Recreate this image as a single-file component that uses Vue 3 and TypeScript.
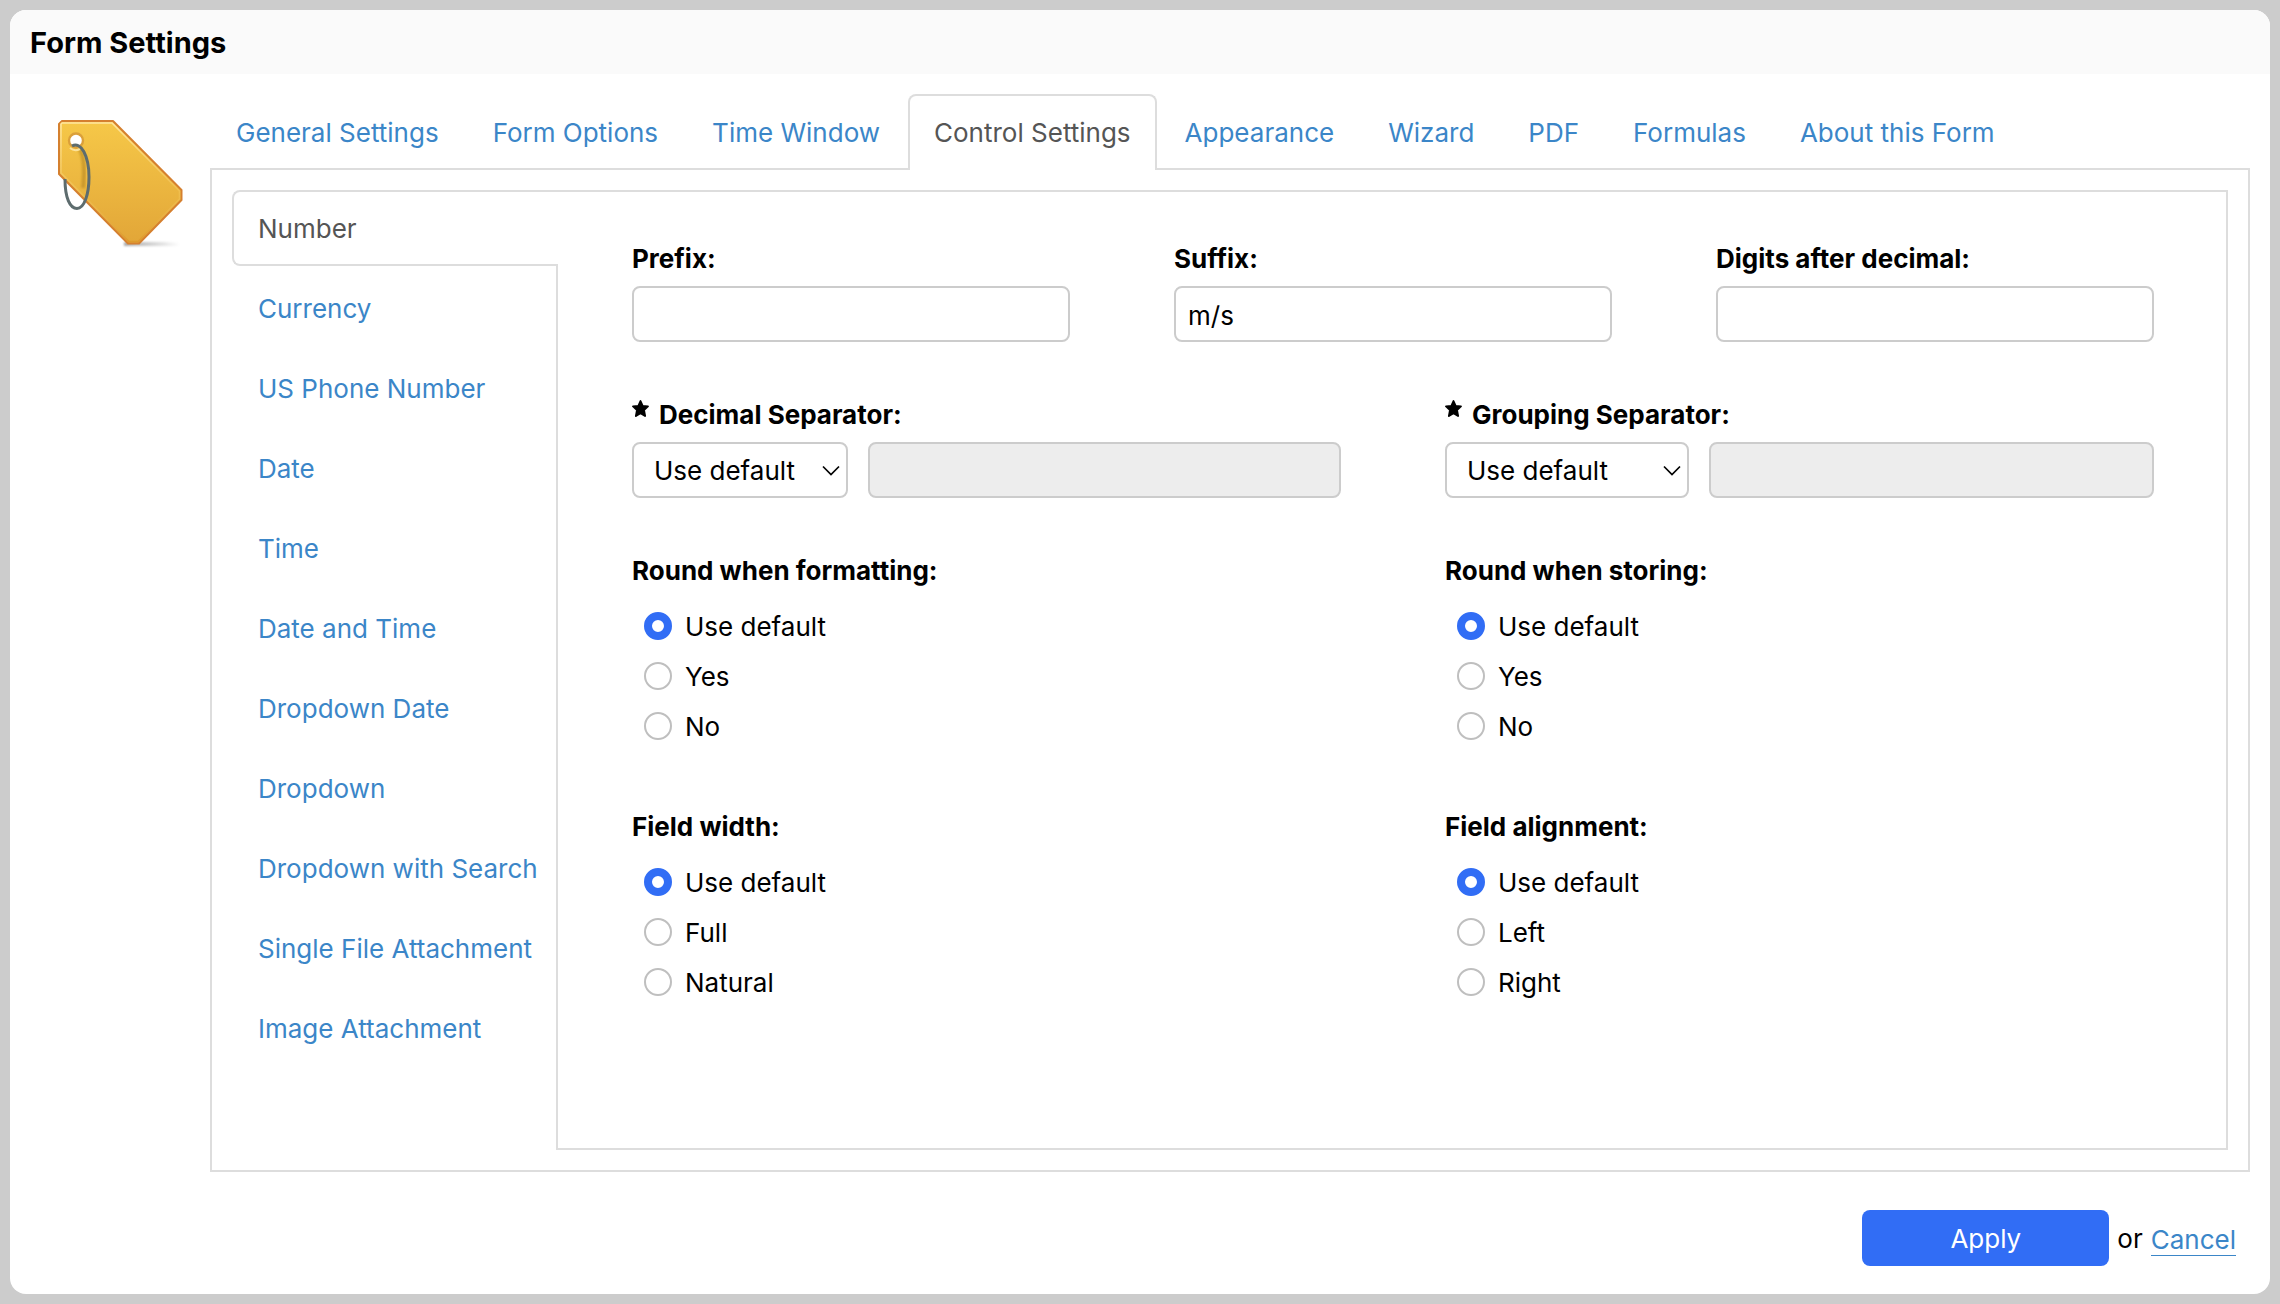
<script setup lang="ts">
import { ref, reactive } from 'vue'

interface SeparatorField {
  id: string
  label: string
  wide: boolean
}

interface ChoiceField {
  id: string
  label: string
  options: string[]
}

const tabs: string[] = [
  'General Settings',
  'Form Options',
  'Time Window',
  'Control Settings',
  'Appearance',
  'Wizard',
  'PDF',
  'Formulas',
  'About this Form',
]
const activeTab = ref('Control Settings')

const controls: string[] = [
  'Number',
  'Currency',
  'US Phone Number',
  'Date',
  'Time',
  'Date and Time',
  'Dropdown Date',
  'Dropdown',
  'Dropdown with Search',
  'Single File Attachment',
  'Image Attachment',
]
const activeControl = ref('Number')

const textFields = reactive([
  { id: 'prefix', label: 'Prefix:', value: '' },
  { id: 'suffix', label: 'Suffix:', value: 'm/s' },
  { id: 'digits', label: 'Digits after decimal:', value: '' },
])

const separators: SeparatorField[] = [
  { id: 'decimal-separator', label: 'Decimal Separator:', wide: false },
  { id: 'grouping-separator', label: 'Grouping Separator:', wide: true },
]

const choices: ChoiceField[] = [
  { id: 'round-formatting', label: 'Round when formatting:', options: ['Use default', 'Yes', 'No'] },
  { id: 'round-storing', label: 'Round when storing:', options: ['Use default', 'Yes', 'No'] },
  { id: 'field-width', label: 'Field width:', options: ['Use default', 'Full', 'Natural'] },
  { id: 'field-alignment', label: 'Field alignment:', options: ['Use default', 'Left', 'Right'] },
]

const selected = reactive<Record<string, string>>({
  'round-formatting': 'Use default',
  'round-storing': 'Use default',
  'field-width': 'Use default',
  'field-alignment': 'Use default',
})
</script>

<template>
  <main class="dialog">
    <header class="dialog-header">
      <h1 class="title">Form Settings</h1>
    </header>

    <div class="dialog-body">
      <svg class="tag-icon" viewBox="0 0 128 128" aria-hidden="true">
        <defs>
          <linearGradient id="tag-fill" x1="0" y1="0" x2="0" y2="1">
            <stop offset="0" stop-color="#f6c848" />
            <stop offset="1" stop-color="#e2a638" />
          </linearGradient>
          <linearGradient id="tag-shadow" x1="0" y1="0" x2="1" y2="0">
            <stop offset="0" stop-color="#000" stop-opacity="0.35" />
            <stop offset="1" stop-color="#000" stop-opacity="0" />
          </linearGradient>
          <linearGradient id="tag-shine" x1="0" y1="0" x2="0" y2="1">
            <stop offset="0" stop-color="#ffe6a0" />
            <stop offset="0.6" stop-color="#f3c65c" stop-opacity="0.5" />
            <stop offset="1" stop-color="#dd9a2c" />
          </linearGradient>
          <filter id="soften" x="-20%" y="-50%" width="140%" height="200%">
            <feGaussianBlur stdDeviation="1.2" />
          </filter>
        </defs>
        <path d="M68 122H108L124 123V126H68Z" fill="url(#tag-shadow)" filter="url(#soften)" />
        <path
          d="M6 1H57L125.500 70V80L83 123.500H72L3 54V4Z"
          fill="url(#tag-fill)"
          stroke="#d5802f"
          stroke-width="2"
          stroke-linejoin="round"
        />
        <path
          d="M6 3H56L123.500 71V79L82 121.500H73L5 53V4Z"
          fill="none"
          stroke="url(#tag-shine)"
          stroke-width="1.600"
        />
        <path
          d="M22 26C28 34 29 50 27 68"
          fill="none"
          stroke="#a87a1c"
          stroke-opacity="0.5"
          stroke-width="4"
          filter="url(#soften)"
        />
        <circle cx="20" cy="20.500" r="7" fill="#fff" stroke="#dba03a" stroke-width="2.400" />
        <path d="M14 28A9 9 0 0 0 24 29" fill="none" stroke="#fbe29a" stroke-width="2" />
        <path
          d="M16 26C25 21 33 36 33 57C33 75 28 88.500 21 88.500C14 88.500 9 78 9 59"
          fill="none"
          stroke="#5d6c6e"
          stroke-width="3"
        />
      </svg>

      <div class="settings">
        <nav class="tabs" aria-label="Settings sections">
          <a
            v-for="tab in tabs"
            :key="tab"
            href="#"
            class="tab"
            :class="{ active: tab === activeTab }"
            @click.prevent="activeTab = tab"
            >{{ tab }}</a
          >
        </nav>

        <section class="panel">
          <nav class="side" aria-label="Control types">
            <a
              v-for="control in controls"
              :key="control"
              href="#"
              class="side-tab"
              :class="{ active: control === activeControl }"
              @click.prevent="activeControl = control"
              >{{ control }}</a
            >
          </nav>

          <form id="control-form" class="form" @submit.prevent>
            <div class="row three">
              <div v-for="field in textFields" :key="field.id" class="field">
                <label class="label" :for="field.id">{{ field.label }}</label>
                <input :id="field.id" v-model="field.value" class="input" type="text" />
              </div>
            </div>

            <div class="row two">
              <div v-for="field in separators" :key="field.id" class="field">
                <label class="label" :for="field.id">
                  <svg class="star" viewBox="0 0 16 16" aria-hidden="true">
                    <path
                      d="M8 1L10 5.500L15 6L11.300 9.500L12.300 15L8 12.500L3.700 15L4.700 9.500L1 6L6 5.500Z"
                      fill="#000"
                      stroke="#000"
                      stroke-width="1.800"
                      stroke-linejoin="round"
                    />
                  </svg>
                  {{ field.label }}
                </label>
                <div class="pair">
                  <div class="select-box" :class="{ wide: field.wide }">
                    <select :id="field.id" class="input select">
                      <option>Use default</option>
                    </select>
                    <svg class="chevron" viewBox="0 0 18 12" aria-hidden="true">
                      <path d="M1 1.500L9 9.500L17 1.500" fill="none" stroke="#000" stroke-width="1.700" />
                    </svg>
                  </div>
                  <input class="input custom" type="text" disabled :aria-label="field.label" />
                </div>
              </div>
            </div>

            <div class="row two">
              <fieldset v-for="field in choices" :key="field.id" class="field choice">
                <legend class="label">{{ field.label }}</legend>
                <div class="options">
                  <label v-for="option in field.options" :key="option" class="option">
                    <input v-model="selected[field.id]" class="radio" type="radio" :name="field.id" :value="option" />
                    <span class="option-text">{{ option }}</span>
                  </label>
                </div>
              </fieldset>
            </div>
          </form>
        </section>
      </div>
    </div>

    <footer class="dialog-footer">
      <button class="apply" type="submit" form="control-form">Apply</button>
      <span class="or">or</span>
      <a class="cancel" href="#">Cancel</a>
    </footer>
  </main>
</template>

<style>
body {
  background: #ccc;
}
</style>

<style scoped>
* {
  box-sizing: border-box;
}

.dialog {
  display: flex;
  flex-direction: column;
  min-height: calc(100vh - 20px);
  margin: 10px;
  overflow: hidden;
  border-radius: 16px;
  background: #fff;
  color: #000;
  font-family: Inter, 'Liberation Sans', sans-serif;
  font-size: 26px;
  line-height: 32px;
}

.dialog-header {
  padding: 17px 20px 15px;
  background: #fafafa;
}

.title {
  margin: 0;
  font-size: 29px;
  font-weight: 700;
  line-height: 32px;
}

.dialog-body {
  display: flex;
  flex: 1;
  gap: 26px;
  padding: 20px 20px 0 46px;
}

.tag-icon {
  flex: none;
  width: 128px;
  height: 128px;
  margin-top: 26px;
}

.settings {
  display: flex;
  flex: 1;
  flex-direction: column;
  min-width: 0;
}

.tabs {
  display: flex;
  gap: 2px;
  margin-bottom: -2px;
}

.tab,
.side-tab {
  border: 2px solid transparent;
  color: #3b86c8;
  text-decoration: none;
  white-space: nowrap;
}

.tab {
  padding: 21px 24px;
  border-bottom: 0;
  border-radius: 8px 8px 0 0;
}

.tab.active {
  z-index: 1;
  border-color: #ddd;
  background: #fff;
  color: #555;
}

.panel {
  display: flex;
  flex: 1;
  padding: 20px;
  border: 2px solid #ddd;
}

.side {
  display: flex;
  flex: none;
  flex-direction: column;
  gap: 4px;
  width: 326px;
  margin-right: -2px;
}

.side-tab {
  padding: 21px 24px 19px;
  border-right: 0;
  border-radius: 8px 0 0 8px;
}

.side-tab.active {
  z-index: 1;
  border-color: #ddd;
  background: #fff;
  color: #555;
}

.form {
  display: flex;
  flex: 1;
  flex-direction: column;
  gap: 56px;
  min-width: 0;
  padding: 50px 72px 50px 74px;
  border: 2px solid #ddd;
}

.row {
  display: grid;
  gap: 56px 104px;
}

.three {
  grid-template-columns: repeat(3, minmax(0, 1fr));
}

.two {
  grid-template-columns: repeat(2, minmax(0, 1fr));
}

.field {
  display: flex;
  flex-direction: column;
  gap: 10px;
  min-width: 0;
}

.choice {
  display: block;
  margin: 0;
  padding: 0;
  border: 0;
}

.label {
  display: flex;
  gap: 10px;
  padding: 0;
  font-weight: 700;
  line-height: 34px;
}

.star {
  width: 17px;
  height: 17px;
  margin-top: 2px;
}

.input {
  width: 100%;
  height: 56px;
  padding: 2px 12px 0;
  border: 2px solid #ccc;
  border-radius: 8px;
  background: #fff;
  color: #000;
  font: inherit;
}

.pair {
  display: flex;
  gap: 20px;
}

.select-box {
  position: relative;
  flex: none;
  width: 216px;
}

.select-box.wide {
  width: 244px;
}

.select {
  padding: 2px 24px 0 20px;
  appearance: none;
}

.chevron {
  position: absolute;
  top: 23px;
  right: 8px;
  width: 18px;
  height: 12px;
  pointer-events: none;
}

.custom {
  flex: 1;
  min-width: 0;
}

.custom:disabled {
  background: #ededed;
}

.options {
  padding: 13px 12px 3px;
}

.option {
  display: flex;
  gap: 13px;
  align-items: center;
  height: 50px;
}

.option-text,
.or {
  padding-top: 2px;
}

.radio {
  width: 28px;
  height: 28px;
  margin: 0;
  border: 2px solid #bfbfbf;
  border-radius: 50%;
  background: #fff;
  appearance: none;
}

.radio:checked {
  border: 8px solid #316df5;
}

.dialog-footer {
  display: flex;
  gap: 8px;
  align-items: center;
  justify-content: flex-end;
  padding: 38px 34px 28px;
}

.apply {
  width: 247px;
  height: 56px;
  padding: 2px 0 0;
  border: 0;
  border-radius: 8px;
  background: #316df5;
  color: #fff;
  font: inherit;
}

.cancel {
  margin-top: 4px;
  border-bottom: 1px solid #3b86c8;
  color: #3b86c8;
  line-height: 30px;
  text-decoration: none;
}
</style>
